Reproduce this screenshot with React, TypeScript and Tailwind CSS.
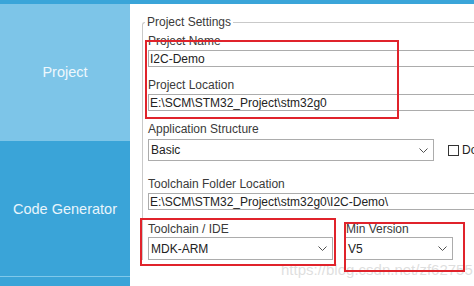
import React from 'react';

function Chevron() {
  return (
    <svg width="9" height="5" viewBox="0 0 9 5" className="shrink-0">
      <path d="M0.5 0.5 L4.5 4.5 L8.5 0.5" fill="none" stroke="#505050" strokeWidth="1" />
    </svg>
  );
}

function Label({ children }: { children: React.ReactNode }) {
  return <div className="h-[14px] leading-[14px] text-[12px] text-[#3a3a3a] whitespace-nowrap">{children}</div>;
}

function TextField({ value, className = '' }: { value: string; className?: string }) {
  return (
    <div className={`h-[17px] border border-[#acacac] bg-white flex items-center pl-[1px] text-[12px] text-[#222] whitespace-nowrap overflow-hidden ${className}`}>
      {value}
    </div>
  );
}

function Select({ value, className = '', height = 'h-[22px]' }: { value: string; className?: string; height?: string }) {
  return (
    <div className={`${height} border border-[#acacac] bg-white flex items-center justify-between pl-[2px] pr-[5px] text-[12px] text-[#222] ${className}`}>
      <span>{value}</span>
      <Chevron />
    </div>
  );
}

export default function App() {
  return (
    <div className="relative w-[474px] h-[286px] overflow-hidden bg-white font-['Liberation_Sans',Arial,sans-serif]">
      <div className="h-[4px] bg-[#3aa5d9]" />
      <div className="flex h-[282px]">
        {/* side tabs */}
        <aside className="w-[130px] shrink-0 flex flex-col">
          <div className="h-[137px] bg-[#7dc5e8] flex items-center justify-center text-[14.5px] text-[#eef8fd]">
            Project
          </div>
          <div className="h-[135px] bg-[#3aa4d8] flex items-center justify-center pt-[3px] text-[14.5px] text-[#e8f5fc]">
            Code Generator
          </div>
          <div className="h-px bg-[#80c8ea]" />
          <div className="flex-1 bg-[#3aa4d8]" />
        </aside>

        <main className="flex-1 pl-[12px] pt-[18px] overflow-hidden">
          <div className="relative w-[420px] border-l border-t border-[#c9c9c9] rounded-tl-[3px] pl-[5px] pt-[11px]">
            <span className="absolute -top-[8px] left-[2px] bg-white px-[2px] leading-[14px] text-[12px] text-[#3a3a3a]">
              Project Settings
            </span>

            <Label>Project Name</Label>
            <TextField value="I2C-Demo" className="mt-[2px] w-[400px]" />

            <div className="mt-[11px]">
              <Label>Project Location</Label>
            </div>
            <TextField value="E:\SCM\STM32_Project\stm32g0" className="mt-[2px] w-[400px]" />

            <div className="mt-[11px]">
              <Label>Application Structure</Label>
            </div>
            <div className="mt-[3px] flex items-center">
              <Select value="Basic" className="w-[286px] shrink-0" />
              <div className="ml-[14px] w-[11px] h-[11px] border border-[#333] bg-white shrink-0" />
              <span className="ml-[3px] text-[12px] text-[#222] whitespace-nowrap">Do not generate the main()</span>
            </div>

            <div className="mt-[16px]">
              <Label>Toolchain Folder Location</Label>
            </div>
            <TextField value="E:\SCM\STM32_Project\stm32g0\I2C-Demo\" className="mt-[2px] w-[400px]" />

            <div className="mt-[12px] flex gap-[12px]">
              <div className="w-[185px] shrink-0">
                <Label>Toolchain / IDE</Label>
                <Select value="MDK-ARM" height="h-[23px]" className="mt-[1px]" />
              </div>
              <div className="w-[108px] shrink-0">
                <div className="pl-[1px]">
                  <Label>Min Version</Label>
                </div>
                <Select value="V5" height="h-[23px]" className="mt-[1px]" />
              </div>
            </div>
          </div>
        </main>
      </div>

      {/* watermark */}
      <div className="absolute left-[281px] top-[261px] text-[15px] leading-[18px] text-[#d4d4d4c0] whitespace-nowrap">
        https://blog.csdn.net/zf62755
      </div>

      {/* red annotation boxes */}
      <div className="absolute left-[145px] top-[40px] w-[254px] h-[79px] border-2 border-[#e0232b]" />
      <div className="absolute left-[140px] top-[218px] w-[196px] h-[48px] border-2 border-[#e0232b]" />
      <div className="absolute left-[344px] top-[222px] w-[121px] h-[50px] border-2 border-[#e0232b]" />
    </div>
  );
}
